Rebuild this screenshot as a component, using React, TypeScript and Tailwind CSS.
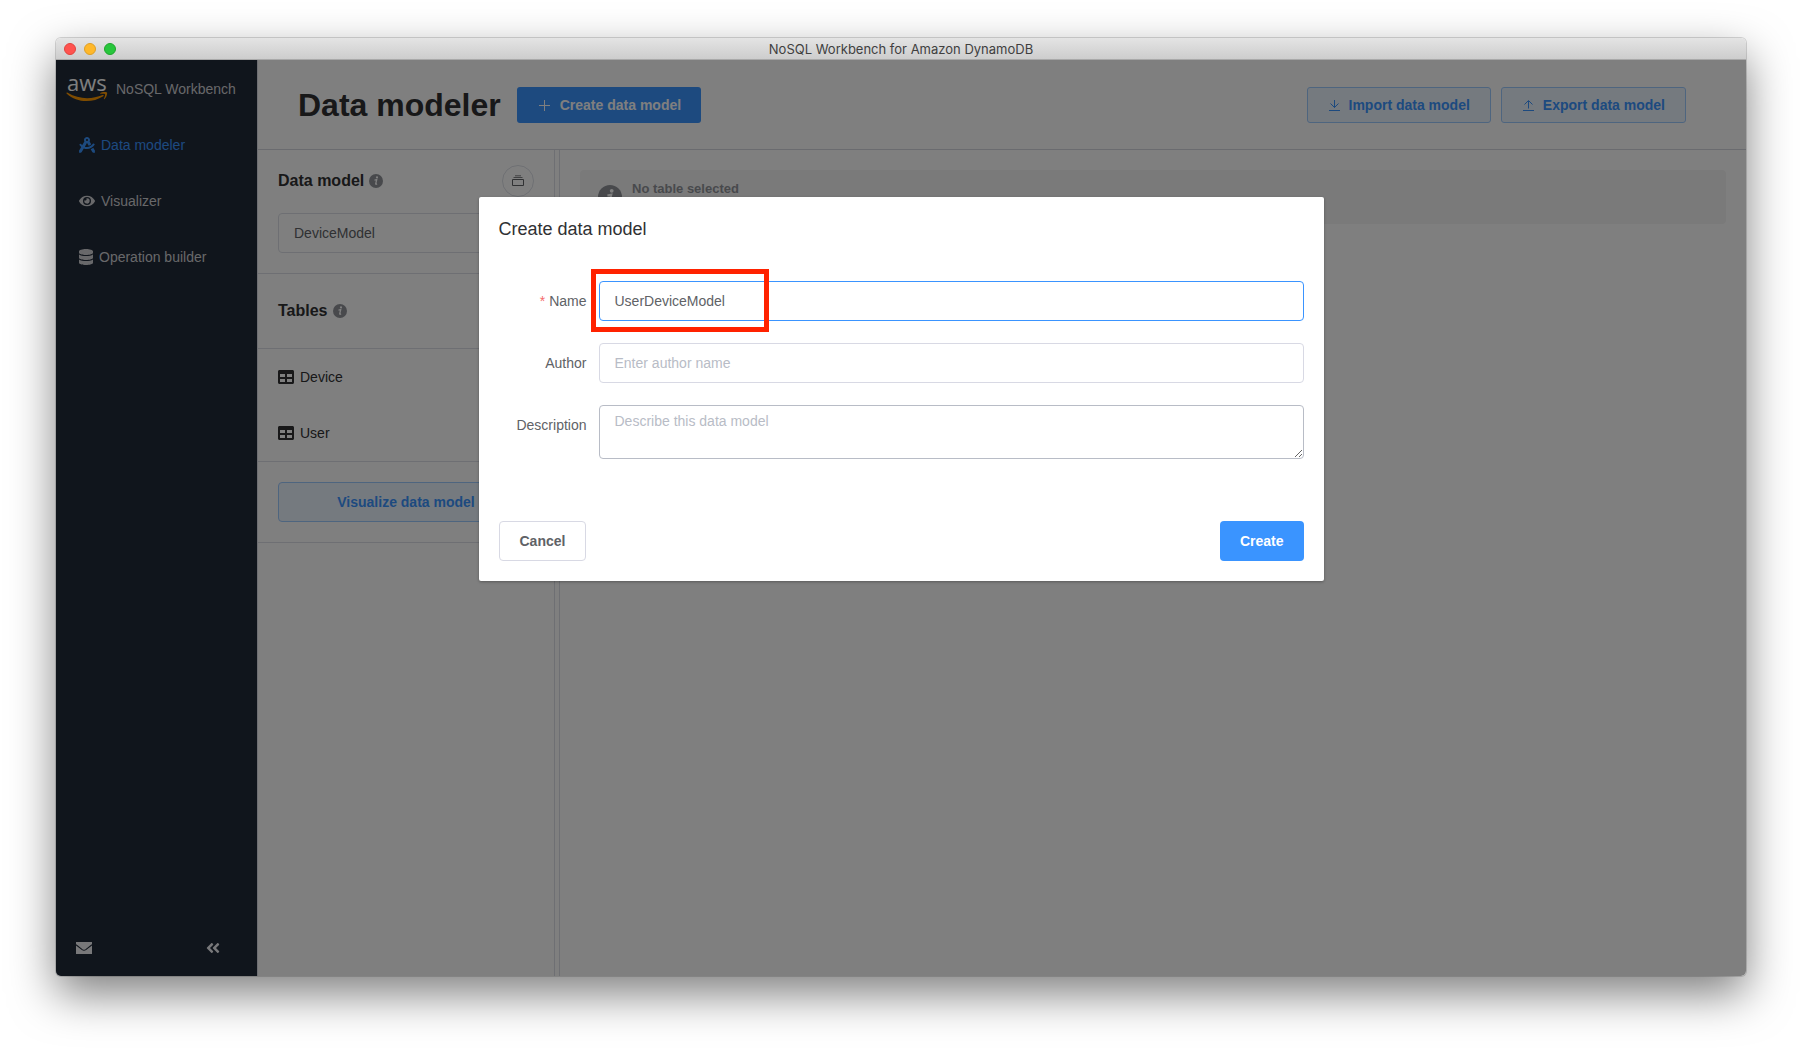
import { useState } from 'react';
import type { ReactNode } from 'react';
import { FaAngleDoubleLeft, FaDatabase, FaDraftingCompass, FaEye, FaTable } from 'react-icons/fa';

const tables = ['Device', 'User'];

function AwsLogo() {
    return (
        <div className="w-[42px] text-[#ffffff]">
            <p className="h-[17px] pl-px font-['Open_Sans',sans-serif] text-[22px] leading-[14px] font-medium">aws</p>
            <svg viewBox="0 0 42 10" className="block h-[10px] w-[42px]" fill="#ff9900">
                <path d="M0.6 0.8 C0.8 0.4 1.2 0.5 1.7 0.8 C13 7.6 26 7.4 36.6 3 C37.6 2.6 38.2 3.6 37.3 4.2 C26 11.4 10.5 10.6 0.8 1.7 C0.4 1.4 0.4 1.1 0.6 0.8 Z" />
                <path d="M34.4 0.9 C36.4 -0.3 40.4 -0.3 41 0.5 C41.6 1.4 40.4 5.4 38.6 7 C38.1 7.4 37.7 7.1 37.9 6.6 C38.5 5.2 39.5 2.8 39 2.2 C38.4 1.5 36 1.6 34.7 1.8 C34.1 1.9 33.9 1.3 34.4 0.9 Z" />
            </svg>
        </div>
    )
}

function PlusIcon() {
    return (
        <svg viewBox="0 0 14 14" className="size-[14px]" fill="none" stroke="currentColor">
            <path d="M7.5 2v11M2 7.5h11" />
        </svg>
    )
}

function DownloadIcon() {
    return (
        <svg viewBox="0 0 13 14" className="h-[14px] w-[13px]" fill="none" stroke="currentColor">
            <path d="M6.5 2v7.5M2.5 5.5l4 4 4-4M1 12.5h11" />
        </svg>
    )
}

function UploadIcon() {
    return (
        <svg viewBox="0 0 13 14" className="h-[14px] w-[13px]" fill="none" stroke="currentColor">
            <path d="M6.5 10.5V3M2.5 6.5l4-4 4 4M1 12.5h11" />
        </svg>
    )
}

function BoxIcon() {
    return (
        <svg viewBox="0 0 12 12" className="size-3" fill="none" stroke="currentColor">
            <path d="M0.5 4.5h11v6h-11z" />
            <path d="M1.5 2.5h9M3 0.8h6" strokeWidth="0.8" />
        </svg>
    )
}

function EnvelopeIcon() {
    return (
        <svg viewBox="0 0 16 12" className="h-3 w-4">
            <path d="M0 0h16v12H0z" fill="currentColor" />
            <path d="M0 2.8 L6.2 7.6 Q8 8.8 9.8 7.6 L16 2.8" fill="none" stroke="#202a38" strokeWidth="1.1" />
        </svg>
    )
}

function ItalicInfo({ className }: { className: string }) {
    return (
        <svg viewBox="0 0 14 14" className={className}>
            <circle cx="7" cy="7" r="7" fill="currentColor" />
            <circle cx="8" cy="3.4" r="1.1" fill="#ffffff" />
            <path d="M5.5 6.2 L7.7 5.7 L6.7 9.8 Q6.6 10.6 8.1 9.9" fill="none" stroke="#ffffff" strokeWidth="1.3" />
        </svg>
    )
}

function NavItem({ icon, text, active }: { icon: ReactNode; text: string; active?: boolean }) {
    return (
        <a href="#" className={active ? "flex h-14 items-center gap-[6px] pl-[23px] text-[#3a94ff]" : "flex h-14 items-center gap-[6px] pl-[23px] text-[#d0d0d4]"}>
            {icon}
            <span>{text}</span>
        </a>
    )
}

function Sidebar() {
    return (
        <nav className="flex w-[201px] shrink-0 flex-col bg-[#202a38]">
            <div className="flex h-[57px] items-center gap-2 pl-[10px] text-[#d0d0d4]">
                <AwsLogo />
                <span>NoSQL Workbench</span>
            </div>
            <NavItem active icon={<FaDraftingCompass className="size-4" />} text="Data modeler" />
            <NavItem icon={<FaEye className="size-4" />} text="Visualizer" />
            <NavItem icon={<FaDatabase className="h-4 w-[14px]" />} text="Operation builder" />
            <div className="mt-auto flex items-center justify-between pr-9 pb-5 pl-5 text-[#f0f0f4]">
                <button aria-label="Contact"><EnvelopeIcon /></button>
                <button aria-label="Collapse"><FaAngleDoubleLeft className="size-4" /></button>
            </div>
        </nav>
    )
}

function Header() {
    return (
        <header className="flex h-[90px] items-center border-b border-[#d5d7de] pr-[60px] pl-10">
            <h1 className="text-[32px] leading-10 font-bold text-[#303133]">Data modeler</h1>
            <button className="ml-4 flex h-9 items-center gap-[9px] rounded-[3px] bg-[#3a94ff] px-5 font-bold text-white">
                <PlusIcon />Create data model
            </button>
            <div className="ml-auto flex gap-[10px] font-bold text-[#3a94ff]">
                <button className="flex h-9 items-center gap-2 rounded-[3px] border border-[#9dcaff] bg-[#ebf4ff] px-5">
                    <DownloadIcon />Import data model
                </button>
                <button className="flex h-9 items-center gap-2 rounded-[3px] border border-[#9dcaff] bg-[#ebf4ff] px-5">
                    <UploadIcon />Export data model
                </button>
            </div>
        </header>
    )
}

function ModelPanel() {
    return (
        <section className="w-[297px] shrink-0 border-r border-[#dcdfe6] text-[#303133]">
            <div className="border-b border-[#dcdfe6] px-5 pt-[15px] pb-5">
                <div className="flex items-center justify-between">
                    <h2 className="flex items-center gap-[5px] text-base font-bold">
                        Data model <ItalicInfo className="size-[14px] text-[#909399]" />
                    </h2>
                    <button aria-label="Manage data models" className="flex size-8 items-center justify-center rounded-full border border-[#dcdfe6] text-[#606266]">
                        <BoxIcon />
                    </button>
                </div>
                <select aria-label="Data model" className="mt-4 h-10 w-full appearance-none rounded border border-[#dcdfe6] bg-white px-[15px] text-[#606266]">
                    <option>DeviceModel</option>
                </select>
            </div>
            <h2 className="flex h-[75px] items-center gap-[5px] border-b border-[#dcdfe6] px-5 text-base font-bold">
                Tables <ItalicInfo className="size-[14px] text-[#909399]" />
            </h2>
            <ul className="border-b border-[#dcdfe6]">
                {tables.map((name) => (
                    <li key={name} className="flex h-14 items-center gap-[6px] px-5">
                        <FaTable className="size-4" />
                        {name}
                    </li>
                ))}
            </ul>
            <div className="border-b border-[#dcdfe6] p-5">
                <button className="h-10 w-full rounded border border-[#9dcaff] bg-[#ebf4ff] font-bold text-[#3a94ff]">Visualize data model</button>
            </div>
        </section>
    )
}

function CreateDialog() {
    const [name, setName] = useState('UserDeviceModel');

    return (
        <div className="absolute inset-0 flex items-start justify-center bg-black/50">
            <form role="dialog" aria-label="Create data model" className="mt-[137px] w-1/2 rounded-xs bg-white p-5 text-[#606266] shadow-[0_1px_3px_rgba(0,0,0,0.3)]" onSubmit={(e) => e.preventDefault()}>
                <h2 className="text-lg leading-6 text-[#303133]">Create data model</h2>
                <div className="mt-10 flex flex-col gap-[22px]">
                    <div className="flex">
                        <label htmlFor="name" className="w-[100px] pr-3 text-right leading-10">
                            <span className="mr-1 text-[#f56c6c]">*</span>Name
                        </label>
                        <div className="relative flex-1">
                            <input id="name" value={name} onChange={(e) => setName(e.target.value)} className="block h-10 w-full rounded border border-[#3a94ff] px-[15px] outline-none" />
                            <div className="pointer-events-none absolute -top-3 -left-2 h-[63px] w-[178px] border-[5px] border-[#ff2200]"></div>
                        </div>
                    </div>
                    <div className="flex">
                        <label htmlFor="author" className="w-[100px] pr-3 text-right leading-10">Author</label>
                        <input id="author" placeholder="Enter author name" className="h-10 flex-1 rounded border border-[#d8d9e4] px-[15px] placeholder:text-[#b8bcc6]" />
                    </div>
                    <div className="flex">
                        <label htmlFor="description" className="w-[100px] pr-3 text-right leading-10">Description</label>
                        <textarea id="description" placeholder="Describe this data model" className="h-[54px] flex-1 resize-y rounded border border-[#b8bcc6] px-[15px] py-[5px] leading-[21px] placeholder:text-[#b8bcc6]"></textarea>
                    </div>
                </div>
                <div className="mt-[62px] flex justify-between font-bold">
                    <button type="button" className="h-10 rounded border border-[#d8d9e4] px-5">Cancel</button>
                    <button type="submit" className="h-10 rounded bg-[#3a94ff] px-5 text-white">Create</button>
                </div>
            </form>
        </div>
    )
}

export default function App() {
    return (
        <main className="flex min-h-screen bg-white px-14 pt-[38px] pb-[74px] font-['Liberation_Sans',sans-serif] text-sm">
            <div className="flex flex-1 flex-col overflow-hidden rounded-[5px] shadow-[0_0_0_1px_rgba(0,0,0,0.15),0_18px_45px_rgba(0,0,0,0.5)]">
                <div className="relative flex h-[22px] items-center justify-center border-b border-[#a9a9a9] bg-linear-to-b from-[#e4e4e4] to-[#cdcdcd]">
                    <div className="absolute left-2 flex gap-2">
                        <span className="size-3 rounded-full border border-[#e0443e] bg-[#ff534f]"></span>
                        <span className="size-3 rounded-full border border-[#dd9f26] bg-[#ffb82a]"></span>
                        <span className="size-3 rounded-full border border-[#1fa52c] bg-[#28c63c]"></span>
                    </div>
                    <p className="font-['Inter',sans-serif] text-[13px] leading-5 text-[#404040]">NoSQL Workbench for Amazon DynamoDB</p>
                </div>
                <div className="relative flex flex-1">
                    <Sidebar />
                    <div className="flex min-w-0 flex-1 flex-col border-l border-[#dcdfe6] bg-white">
                        <Header />
                        <div className="flex flex-1">
                            <ModelPanel />
                            <div className="ml-1 flex-1 border-l border-[#dcdfe6] p-5">
                                <div className="flex h-[54px] items-center gap-[10px] rounded bg-[#f4f4f5] px-[18px] text-[#909399]">
                                    <ItalicInfo className="size-6" />
                                    <p className="self-start pt-[10px] text-[13px] leading-[18px] font-bold">No table selected</p>
                                </div>
                            </div>
                        </div>
                    </div>
                    <CreateDialog />
                </div>
            </div>
        </main>
    )
}
